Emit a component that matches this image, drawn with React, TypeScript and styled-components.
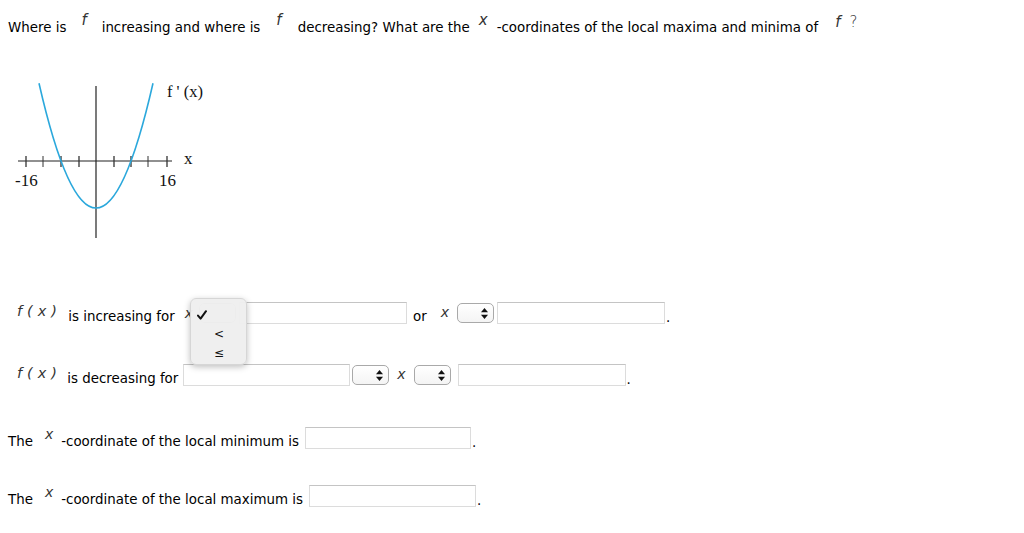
import React from 'react';
import styled, { createGlobalStyle } from 'styled-components';

const GlobalStyle = createGlobalStyle`
  html, body {
    margin: 0;
    padding: 0;
    background: #ffffff;
  }
  body {
    font-family: Verdana, "DejaVu Sans", sans-serif;
    font-size: 13.4px;
    color: #000;
  }
`;

const Page = styled('div')`
  position: relative;
  width: 1024px;
  height: 533px;
  padding: 0 8px;
  box-sizing: border-box;
  overflow: hidden;
`;

const Question = styled('p')`
  margin: 0;
  padding-top: 19px;
  line-height: 16px;
  white-space: nowrap;
`;

const MathVar = styled('span')<{ $raise?: number; $l?: number; $r?: number; $italic?: boolean; $size?: number }>`
  display: inline-block;
  font-family: "DejaVu Sans", sans-serif;
  font-style: ${p => (p.$italic === false ? 'normal' : 'italic')};
  font-weight: 200;
  font-size: ${p => p.$size ?? 14}px;
  color: #333;
  padding: 0 ${p => p.$r ?? 0}px 0 ${p => p.$l ?? 0}px;
  position: relative;
  top: -${p => p.$raise ?? 5}px;
`;

const FofX = styled(MathVar)`
  font-size: 14.5px;
  letter-spacing: 0.2px;
`;

const GraphBox = styled('div')`
  margin-top: 41px;
  margin-left: 2px;
  width: 200px;
  height: 166px;
  svg {
    display: block;
  }
`;

const Row = styled('div')<{ $top: number }>`
  position: relative;
  display: flex;
  align-items: center;
  height: 22px;
  margin-top: ${p => p.$top}px;
  white-space: nowrap;
`;

const Label = styled('span')<{ $left?: number }>`
  margin-left: ${p => p.$left ?? 0}px;
  line-height: 22px;
  position: relative;
  top: 4px;
`;

const Answer = styled('div')<{ $width?: number; $left?: number }>`
  width: ${p => p.$width ?? 168}px;
  height: 22px;
  margin-left: ${p => p.$left ?? 0}px;
  box-sizing: border-box;
  border: 1px solid #dcdcdc;
  border-top-color: #c4c4c4;
  background: #fff;
`;

const Select = styled('div')<{ $left?: number }>`
  position: relative;
  width: 37px;
  height: 20px;
  margin-left: ${p => p.$left ?? 0}px;
  box-sizing: border-box;
  border: 1px solid #a9a9a9;
  border-radius: 5px;
  background: linear-gradient(#ffffff, #f4f4f4);
  svg {
    position: absolute;
    right: 5px;
    top: 4px;
  }
`;

const Dot = styled('span')`
  align-self: flex-end;
  margin-left: 1px;
  line-height: 12px;
`;

const Popup = styled('div')`
  position: absolute;
  left: 182px;
  top: -4px;
  width: 57px;
  height: 67px;
  box-sizing: border-box;
  border-radius: 6px;
  background: rgba(238, 238, 238, 0.97);
  border: 1px solid #d6d6d6;
  box-shadow: 0 2px 6px rgba(0, 0, 0, 0.25);
  font-family: "DejaVu Sans", sans-serif;
  font-size: 12px;
  z-index: 2;
`;

const Option = styled('div')<{ $top: number; $left: number; $size?: number }>`
  position: absolute;
  top: ${p => p.$top}px;
  left: ${p => p.$left}px;
  font-size: ${p => p.$size ?? 12}px;
  line-height: 14px;
  color: #111;
`;

const Arrows = () => (
  <svg width="7" height="11" viewBox="0 0 7 11">
    <path d="M3.5 0 L7 4.2 H0 Z" fill="#111" />
    <path d="M3.5 11 L7 6.8 H0 Z" fill="#111" />
  </svg>
);

const Check = () => (
  <svg width="10" height="10" viewBox="0 0 10 10">
    <path d="M1 5.6 L3.6 8.6 L9 1.2" fill="none" stroke="#111" strokeWidth="2" strokeLinecap="round" strokeLinejoin="round" />
  </svg>
);

function Graph() {
  const ticks = [16, 33, 51, 69, 104, 121, 138, 157];
  return (
    <svg width="200" height="166" viewBox="0 0 200 166">
      <line x1="8" y1="84" x2="162" y2="84" stroke="#222" strokeWidth="1.2" />
      <line x1="86" y1="9" x2="86" y2="161" stroke="#222" strokeWidth="1.2" />
      {ticks.map(t => (
        <line key={t} x1={t} y1="79" x2={t} y2="90" stroke="#333" strokeWidth={t === 33 || t === 138 ? 1 : 1.3} />
      ))}
      <path d="M29 6.2 Q86 255.8 143 6.2" fill="none" stroke="#2ba8dc" strokeWidth="1.6" />
      <g fontFamily='"Liberation Serif", "Times New Roman", serif' fontSize="17" fill="#111">
        <text x="5" y="109">-16</text>
        <text x="149" y="109">16</text>
        <text x="174" y="87">x</text>
        <text x="157" y="20" fontSize="16.5">f ' (x)</text>
      </g>
    </svg>
  );
}

export default function App() {
  return (
    <Page>
      <GlobalStyle />
      <Question>
        Where is<MathVar $size={15} $l={15} $r={15} $raise={7}>f</MathVar>increasing and where is<MathVar $size={15} $l={16} $r={16} $raise={7}>f</MathVar>decreasing? What are the<MathVar $size={15} $l={9} $r={9} $raise={7}>x</MathVar>-coordinates of the local maxima and minima of<MathVar $size={15} $l={17} $r={9} $raise={5}>f</MathVar><MathVar $size={15} $italic={false} $raise={5}>?</MathVar>
      </Question>

      <GraphBox>
        <Graph />
      </GraphBox>

      <Row $top={59}>
        <FofX $raise={2} $l={9}>f ( x )</FofX>
        <Label $left={11}>is increasing for</Label>
        <MathVar $raise={0} $l={10}>x</MathVar>
        <Select $left={6} />
        <Answer $left={3} />
        <Label $left={6}>or</Label>
        <MathVar $raise={1} $l={14}>x</MathVar>
        <Select $left={8}><Arrows /></Select>
        <Answer $left={3} />
        <Dot>.</Dot>
        <Popup>
          <Option $top={10} $left={6}><Check /></Option>
          <Option $top={28} $left={23}>&lt;</Option>
          <Option $top={47} $left={23}>≤</Option>
        </Popup>
      </Row>

      <Row $top={40}>
        <FofX $raise={2} $l={9}>f ( x )</FofX>
        <Label $left={10}>is decreasing for</Label>
        <Answer $left={5} $width={167} />
        <Select $left={2}><Arrows /></Select>
        <MathVar $raise={1} $l={8}>x</MathVar>
        <Select $left={8}><Arrows /></Select>
        <Answer $left={7} />
        <Dot>.</Dot>
      </Row>

      <Row $top={41}>
        <Label>The</Label>
        <MathVar $raise={4} $l={12}>x</MathVar>
        <Label $left={8}>-coordinate of the local minimum is</Label>
        <Answer $left={6} $width={166} />
        <Dot>.</Dot>
      </Row>

      <Row $top={36}>
        <Label>The</Label>
        <MathVar $raise={4} $l={12}>x</MathVar>
        <Label $left={8}>-coordinate of the local maximum is</Label>
        <Answer $left={6} $width={167} />
        <Dot>.</Dot>
      </Row>
    </Page>
  );
}
